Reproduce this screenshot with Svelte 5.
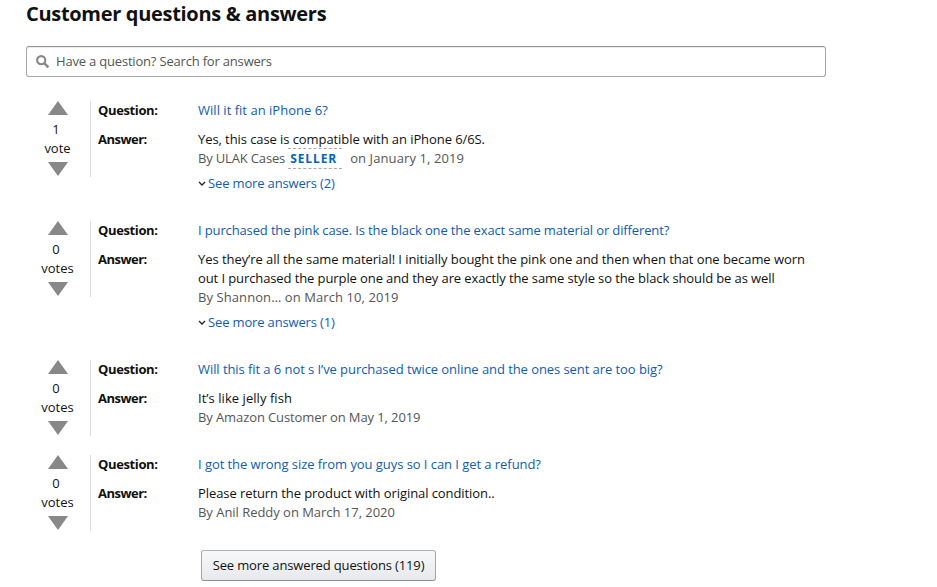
<script>
	const questions = [
		{
			votes: 1,
			question: { text: 'Will it fit an iPhone 6?', spacing: 0.02 },
			answer: [{ text: 'Yes, this case is compatible with an iPhone 6/6S.', spacing: -0.08 }],
			by: { text: 'By ULAK Cases', spacing: -0.16 },
			seller: true,
			date: 'on January 1, 2019',
			more: 2
		},
		{
			votes: 0,
			question: {
				text: 'I purchased the pink case. Is the black one the exact same material or different?',
				spacing: -0.135
			},
			answer: [
				{
					text: 'Yes they’re all the same material! I initially bought the pink one and then when that one became worn',
					spacing: -0.06
				},
				{
					text: 'out I purchased the purple one and they are exactly the same style so the black should be as well',
					spacing: -0.1
				}
			],
			by: { text: 'By Shannon… on March 10, 2019', spacing: 0.08 },
			more: 1
		},
		{
			votes: 0,
			question: {
				text: 'Will this fit a 6 not s I’ve purchased twice online and the ones sent are too big?',
				spacing: -0.07
			},
			answer: [{ text: 'It’s like jelly fish', spacing: 0.05 }],
			by: { text: 'By Amazon Customer on May 1, 2019', spacing: -0.1 },
			more: 0
		},
		{
			votes: 0,
			question: {
				text: 'I got the wrong size from you guys so I can I get a refund?',
				spacing: -0.06
			},
			answer: [{ text: 'Please return the product with original condition..', spacing: -0.08 }],
			by: { text: 'By Anil Reddy on March 17, 2020', spacing: -0.03 },
			more: 0
		}
	];

	let search = $state('');
</script>

<main class="page">
	<h2>Customer questions &amp; answers</h2>

	<label class="search">
		<svg width="14" height="14" viewBox="0 0 14 14">
			<circle cx="5.2" cy="5.2" r="4.1" fill="none" stroke="#888" stroke-width="2.1" />
			<path d="M8.2 8.2 L12.4 12.4" stroke="#888" stroke-width="2.5" />
		</svg>
		<input bind:value={search} placeholder="Have a question? Search for answers" />
	</label>

	{#each questions as item}
		<section class="item">
			<div class="votes">
				<svg width="20" height="14"><path d="M10 0 L20 14 H0 Z" /></svg>
				<span>{item.votes}</span>
				<span class="unit">{item.votes === 1 ? 'vote' : 'votes'}</span>
				<svg class="down" width="20" height="14"><path d="M0 0 H20 L10 14 Z" /></svg>
			</div>

			<div class="content">
				<div class="row">
					<b class="q">Question:</b>
					<a href="#question" style:letter-spacing="{item.question.spacing}px">{item.question.text}</a>
				</div>
				<div class="row">
					<b class="a">Answer:</b>
					<div class="answer">
						{#each item.answer as line}
							<div style:letter-spacing="{line.spacing}px">{line.text}</div>
						{/each}
						<div class="by">
							<span style:letter-spacing="{item.by.spacing}px">{item.by.text}</span>
							{#if item.seller}
								<span class="seller">SELLER</span>
								<span class="date">{item.date}</span>
							{/if}
						</div>
						{#if item.more}
							<a class="more" href="#more">
								<svg width="8" height="6"><path d="M1 1 L4 4 L7 1" /></svg>
								<span>See more answers ({item.more})</span>
							</a>
						{/if}
					</div>
				</div>
			</div>
		</section>
	{/each}

	<button>See more answered questions (119)</button>
</main>

<style>
	:global(body) {
		background: #fff;
	}

	.page {
		box-sizing: border-box;
		width: 937px;
		height: 587px;
		padding: 0 26px;
		overflow: hidden;
		font: 13px/19px 'Open Sans', sans-serif;
		color: #111;
	}

	h2 {
		margin: 0 0 19px;
		font-size: 20px;
		line-height: 27px;
		font-weight: 700;
		letter-spacing: -0.31px;
	}

	.search {
		display: flex;
		align-items: center;
		box-sizing: border-box;
		width: 800px;
		height: 31px;
		margin-bottom: 24px;
		padding: 0 9px;
		border: 1px solid #a6a6a6;
		border-top-color: #949494;
		border-radius: 3px;
		box-shadow: inset 0 1px 0 rgba(0, 0, 0, 0.07);
	}

	input {
		flex: 1;
		margin-left: 6px;
		padding: 0;
		border: none;
		outline: none;
		background: none;
		font: inherit;
		letter-spacing: -0.19px;
	}

	input::placeholder {
		color: #555;
		opacity: 1;
	}

	.item {
		display: flex;
		margin-bottom: 19px;
	}

	.votes {
		display: flex;
		flex-direction: column;
		align-items: center;
		width: 64px;
		height: 76px;
		border-right: 1px solid #ddd;
	}

	.votes svg {
		flex: none;
		fill: #888;
	}

	.votes span {
		margin-right: 4px;
	}

	.votes span:not(.unit) {
		padding-top: 5px;
	}

	.votes .unit {
		margin-right: 1px;
	}

	.votes .down {
		margin-top: 4px;
	}

	.content {
		margin-left: 7px;
	}

	.row {
		display: flex;
		margin-bottom: 10px;
	}

	.row:last-child {
		margin-bottom: 0;
	}

	b {
		flex: none;
		width: 100px;
	}

	.q {
		letter-spacing: -0.37px;
	}

	.a {
		letter-spacing: -0.53px;
	}

	a {
		color: #0f5cb5;
		text-decoration: none;
	}

	.answer,
	a {
		white-space: nowrap;
	}

	.by {
		display: flex;
		color: #555;
	}

	.seller {
		width: 54px;
		box-sizing: border-box;
		height: 21px;
		margin: -1px 8px -1px 3px;
		padding-left: 2px;
		border: dashed #aaa;
		border-width: 1px 0;
		color: #0066c0;
		font-size: 12px;
		font-weight: 700;
		letter-spacing: 0.9px;
	}

	.date {
		letter-spacing: 0.1px;
	}

	.more {
		display: flex;
		align-items: center;
		margin: 6px 0 9px;
		letter-spacing: -0.15px;
	}

	.more svg {
		margin-right: 2px;
		fill: none;
		stroke: #222;
		stroke-width: 1.3;
	}

	button {
		display: block;
		width: 235px;
		height: 31px;
		margin-left: 175px;
		padding: 0;
		border: 1px solid;
		border-color: #adb1b8 #a2a6ac #8d9096;
		border-radius: 3px;
		background: linear-gradient(#f7f8fa, #e7e9ec);
		font: inherit;
		letter-spacing: -0.14px;
		color: #111;
		white-space: nowrap;
	}
</style>
